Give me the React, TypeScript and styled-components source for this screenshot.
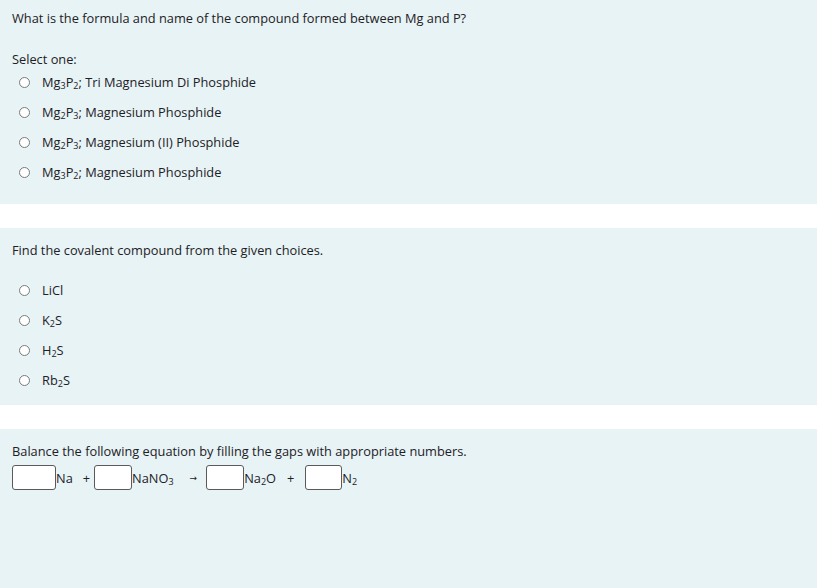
import styled, { createGlobalStyle } from 'styled-components'

const Global = createGlobalStyle`
  html, body {
    margin: 0;
    padding: 0;
    background: #fff;
  }
  body {
    font-family: 'Open Sans', 'Noto Sans', sans-serif;
    font-size: 12.8px;
    color: #1d2125;
  }
`

const Page = styled.div`
  display: flex;
  flex-direction: column;
  gap: 24px;
  width: 817px;
  height: 588px;
  overflow: hidden;
`

const Panel = styled.div<{ $h?: number }>`
  background: #e7f3f5;
  padding: 9px 12px 0;
  box-sizing: border-box;
  height: ${(p) => (p.$h ? `${p.$h}px` : 'auto')};
  flex: ${(p) => (p.$h ? 'none' : '1')};
`

const Prompt = styled.div<{ $top?: number }>`
  line-height: 18px;
  margin-top: ${(p) => p.$top ?? 0}px;
`

const Label = styled.div`
  margin-top: 23px;
  line-height: 18px;
`

const Options = styled.div<{ $top: number }>`
  display: flex;
  flex-direction: column;
  gap: 12px;
  margin-top: ${(p) => p.$top}px;
  padding-left: 7px;
`

const Option = styled.label`
  display: flex;
  align-items: center;
  height: 18px;
  line-height: 18px;
`

const Radio = styled.span`
  width: 9px;
  height: 9px;
  border: 1.5px solid #7a7a7a;
  border-radius: 50%;
  background: #fff;
  margin-right: 12px;
  flex: none;
`

const Text = styled.span`
  white-space: pre;
`

const Sub = styled.sub`
  font-size: 9px;
  vertical-align: -2px;
  line-height: 0;
`

const Equation = styled.div`
  display: flex;
  align-items: center;
  margin-top: 5px;
`

const Gap = styled.span<{ $w: number }>`
  display: inline-block;
  width: ${(p) => p.$w}px;
  height: 23px;
  border: 1px solid #5a5a5a;
  border-radius: 3px;
  background: #fff;
  flex: none;
`

const Sign = styled.span<{ $l: number; $r: number }>`
  margin: 0 ${(p) => p.$r}px 0 ${(p) => p.$l}px;
`

const Arrow = styled.span`
  font-family: 'DejaVu Sans', sans-serif;
  font-size: 9px;
  margin: 0 9px 0 16px;
`

export default function App() {
  return (
    <>
      <Global />
      <Page>
        <Panel $h={204}>
          <Prompt>What is the formula and name of the compound formed between Mg and P?</Prompt>
          <Label>Select one:</Label>
          <Options $top={5}>
            <Option>
              <Radio />
              <Text>Mg<Sub>3</Sub>P<Sub>2</Sub>; Tri Magnesium Di Phosphide</Text>
            </Option>
            <Option>
              <Radio />
              <Text>Mg<Sub>2</Sub>P<Sub>3</Sub>; Magnesium Phosphide</Text>
            </Option>
            <Option>
              <Radio />
              <Text>Mg<Sub>2</Sub>P<Sub>3</Sub>; Magnesium (II) Phosphide</Text>
            </Option>
            <Option>
              <Radio />
              <Text>Mg<Sub>3</Sub>P<Sub>2</Sub>; Magnesium Phosphide</Text>
            </Option>
          </Options>
        </Panel>
        <Panel $h={177}>
          <Prompt $top={4}>Find the covalent compound from the given choices.</Prompt>
          <Options $top={22}>
            <Option>
              <Radio />
              <Text>LiCl</Text>
            </Option>
            <Option>
              <Radio />
              <Text>K<Sub>2</Sub>S</Text>
            </Option>
            <Option>
              <Radio />
              <Text>H<Sub>2</Sub>S</Text>
            </Option>
            <Option>
              <Radio />
              <Text>Rb<Sub>2</Sub>S</Text>
            </Option>
          </Options>
        </Panel>
        <Panel>
          <Prompt $top={4}>Balance the following equation by filling the gaps with appropriate numbers.</Prompt>
          <Equation>
            <Gap $w={42} />
            <Text>Na</Text>
            <Sign $l={10} $r={4}>+</Sign>
            <Gap $w={36} />
            <Text>NaNO<Sub>3</Sub></Text>
            <Arrow>→</Arrow>
            <Gap $w={36} />
            <Text>Na<Sub>2</Sub>O</Text>
            <Sign $l={11} $r={11}>+</Sign>
            <Gap $w={35} />
            <Text>N<Sub>2</Sub></Text>
          </Equation>
        </Panel>
      </Page>
    </>
  )
}
